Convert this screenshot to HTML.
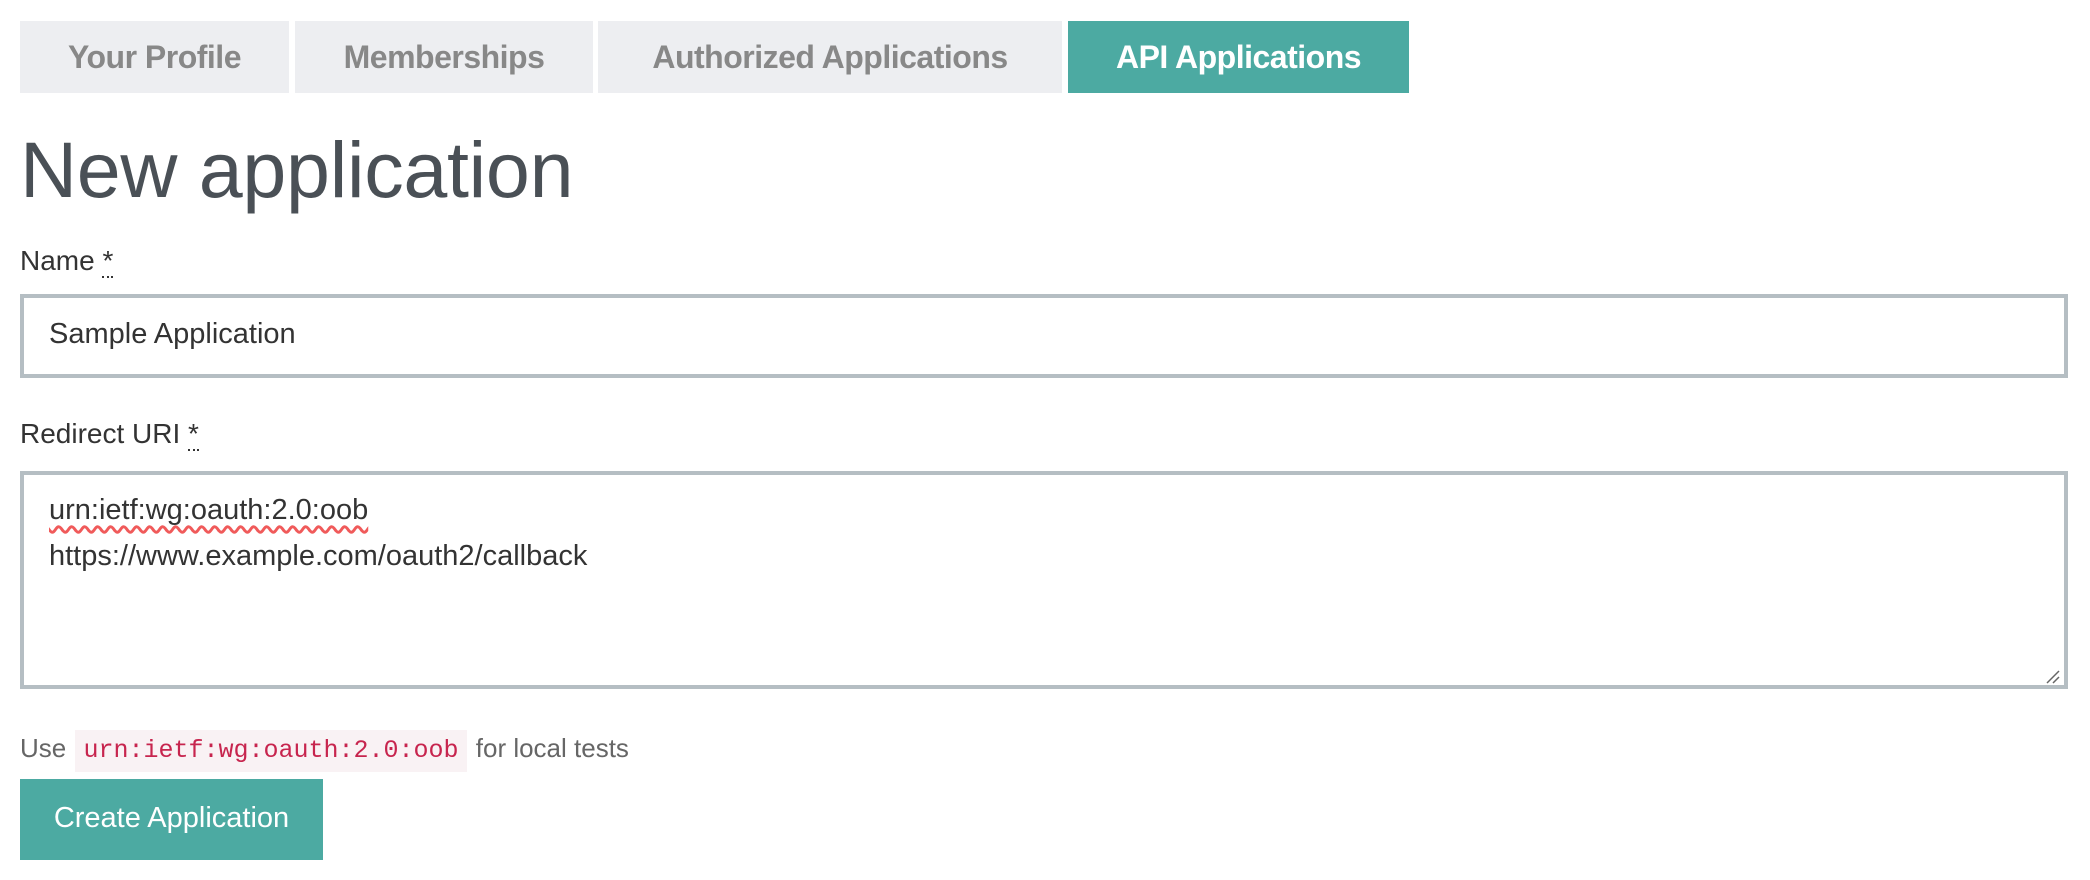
<!DOCTYPE html>
<html><head><meta charset="utf-8"><style>
body{margin:0;width:2090px;height:880px;background:#fff;position:relative;overflow:hidden;font-family:"Liberation Sans",sans-serif;}
.a{position:absolute;white-space:nowrap}
.tab{position:absolute;top:21px;height:72px;background:#edeef1;color:#888;font-weight:bold;font-size:32px;line-height:72px;text-align:center;letter-spacing:-0.5px}
.box{position:absolute;left:20px;width:2040px;border:4px solid #b5bec3;background:#fff}
</style></head><body>
<div class="tab" style="left:20px;width:269px">Your Profile</div>
<div class="tab" style="left:295px;width:298px">Memberships</div>
<div class="tab" style="left:598px;width:464px">Authorized Applications</div>
<div class="tab" style="left:1068px;width:341px;background:#4caaa2;color:#fff">API Applications</div>
<div class="a" style="left:20px;top:118px;font-size:79px;color:#4a5056;line-height:104px;letter-spacing:-0.3px">New application</div>
<div class="a" style="left:20px;top:243px;font-size:28px;color:#333;line-height:36px">Name <span style="border-bottom:2px dotted #333">*</span></div>
<div class="box" style="top:294px;height:76px"></div>
<div class="a" style="left:49px;top:316px;font-size:29px;color:#333;line-height:36px">Sample Application</div>
<div class="a" style="left:20px;top:416px;font-size:28px;color:#333;line-height:36px">Redirect URI <span style="border-bottom:2px dotted #333">*</span></div>
<div class="box" style="top:471px;height:210px"></div>
<div class="a" style="left:49px;top:487px;font-size:29px;color:#333;line-height:46px"><span style="text-decoration:underline wavy #f05a5a;text-underline-offset:6px">urn:ietf:wg:oauth:2.0:oob</span><br>https://www.example.com/oauth2/callback</div>
<svg class="a" style="left:2046px;top:670px" width="14" height="14"><path d="M1 13L13 1M7 13L13 7" stroke="#666" stroke-width="1.5"/></svg>
<div class="a" style="left:20px;top:727px;font-size:26px;color:#666;line-height:42px">Use <span style="display:inline-block;background:#f9f2f4;color:#c7254e;font-family:'Liberation Mono',monospace;font-size:25px;padding:0 8px;margin:0 2px">urn:ietf:wg:oauth:2.0:oob</span> for local tests</div>
<div class="a" style="left:20px;top:779px;width:303px;height:81px;background:#4caaa2;color:#fff;font-size:29px;line-height:78px;text-align:center">Create Application</div>
</body></html>
